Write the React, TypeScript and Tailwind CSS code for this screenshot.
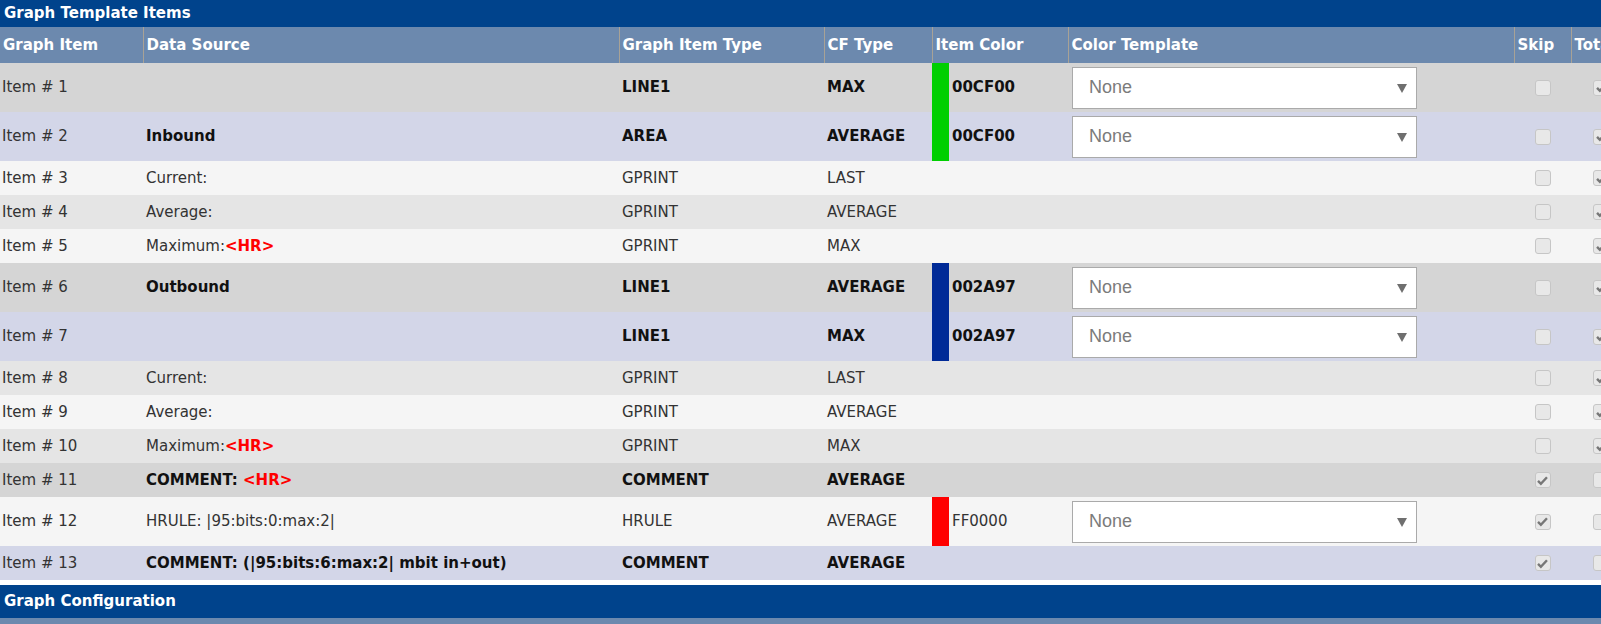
import React from "react";

type Item = {
  id: number;
  source: React.ReactNode;
  type: string;
  cf: string;
  color?: string;
  bold: boolean;
  tall: boolean;
  bg: string;
  skip: boolean;
  total: boolean;
};

const HR = () => <span className="font-bold text-[#ff0000]">&lt;HR&gt;</span>;

const items: Item[] = [
  { id: 1, source: "", type: "LINE1", cf: "MAX", color: "00CF00", bold: true, tall: true, bg: "bg-[#d5d5d5]", skip: false, total: true },
  { id: 2, source: "Inbound", type: "AREA", cf: "AVERAGE", color: "00CF00", bold: true, tall: true, bg: "bg-[#d3d6e8]", skip: false, total: true },
  { id: 3, source: "Current:", type: "GPRINT", cf: "LAST", bold: false, tall: false, bg: "bg-[#f5f5f5]", skip: false, total: true },
  { id: 4, source: "Average:", type: "GPRINT", cf: "AVERAGE", bold: false, tall: false, bg: "bg-[#e5e5e5]", skip: false, total: true },
  { id: 5, source: <>Maximum:<HR /></>, type: "GPRINT", cf: "MAX", bold: false, tall: false, bg: "bg-[#f5f5f5]", skip: false, total: true },
  { id: 6, source: "Outbound", type: "LINE1", cf: "AVERAGE", color: "002A97", bold: true, tall: true, bg: "bg-[#d5d5d5]", skip: false, total: true },
  { id: 7, source: "", type: "LINE1", cf: "MAX", color: "002A97", bold: true, tall: true, bg: "bg-[#d3d6e8]", skip: false, total: true },
  { id: 8, source: "Current:", type: "GPRINT", cf: "LAST", bold: false, tall: false, bg: "bg-[#e5e5e5]", skip: false, total: true },
  { id: 9, source: "Average:", type: "GPRINT", cf: "AVERAGE", bold: false, tall: false, bg: "bg-[#f5f5f5]", skip: false, total: true },
  { id: 10, source: <>Maximum:<HR /></>, type: "GPRINT", cf: "MAX", bold: false, tall: false, bg: "bg-[#e5e5e5]", skip: false, total: true },
  { id: 11, source: <>COMMENT: <HR /></>, type: "COMMENT", cf: "AVERAGE", bold: true, tall: false, bg: "bg-[#d5d5d5]", skip: true, total: false },
  { id: 12, source: "HRULE: |95:bits:0:max:2|", type: "HRULE", cf: "AVERAGE", color: "FF0000", bold: false, tall: true, bg: "bg-[#f5f5f5]", skip: true, total: false },
  { id: 13, source: "COMMENT: (|95:bits:6:max:2| mbit in+out)", type: "COMMENT", cf: "AVERAGE", bold: true, tall: false, bg: "bg-[#d3d6e8]", skip: true, total: false },
];

const swatch: Record<string, string> = {
  "00CF00": "bg-[#00cf00]",
  "002A97": "bg-[#002a97]",
  FF0000: "bg-[#ff0000]",
};

function Checkbox({ checked }: { checked: boolean }) {
  return (
    <span className="inline-flex h-4 w-4 items-center justify-center rounded-[3px] border border-[#c6c6c6] bg-[#e8e8e8] align-middle">
      {checked && (
        <svg viewBox="0 0 16 16" className="h-[13px] w-[13px]">
          <path d="M2.5 8.5l3.5 3.5 7.5-8" fill="none" stroke="#777777" strokeWidth="3" />
        </svg>
      )}
    </span>
  );
}

function ColorSelect() {
  return (
    <div className="flex h-[42px] w-[345px] items-center justify-between border border-[#aaaaaa] bg-white pl-[16px] pr-[9px] font-['Liberation_Sans',Arial,sans-serif] text-[18px] text-[#7b7b7b]">
      <span>None</span>
      <svg viewBox="0 0 10 10" className="h-[10px] w-[10px]">
        <path d="M0 1h10L5 10z" fill="#6f6f6f" />
      </svg>
    </div>
  );
}

const headers = [
  "Graph Item",
  "Data Source",
  "Graph Item Type",
  "CF Type",
  "Item Color",
  "Color Template",
  "Skip",
  "Total",
];

export default function App() {
  return (
    <div className="w-[1601px] overflow-hidden bg-white font-['DejaVu_Sans',Verdana,sans-serif]">
      <div className="w-[1660px]">
        <div className="flex h-[27px] items-center bg-[#00438c] px-1 text-[15px] font-bold text-white">
          Graph Template Items
        </div>
        <table className="w-[1660px] table-fixed border-collapse">
          <colgroup>
            <col className="w-[143px]" />
            <col className="w-[476px]" />
            <col className="w-[205px]" />
            <col className="w-[108px]" />
            <col className="w-[136px]" />
            <col className="w-[446px]" />
            <col className="w-[57px]" />
            <col className="w-[89px]" />
          </colgroup>
          <thead>
            <tr className="h-[36px] bg-[#6c89ae] text-left text-[15px] font-bold text-white">
              {headers.map((h, i) => (
                <th
                  key={h}
                  className={`overflow-hidden whitespace-nowrap px-[3px] font-bold ${i > 0 ? "border-l border-[#a8a296]" : ""}`}
                >
                  {h}
                </th>
              ))}
            </tr>
          </thead>
          <tbody className="text-[15px]">
            {items.map((it) => (
              <tr key={it.id} className={`${it.bg} ${it.tall ? "h-[49px]" : "h-[34px]"}`}>
                <td className="whitespace-nowrap px-[2px] text-[#333333]">Item # {it.id}</td>
                <td className={`whitespace-nowrap px-[3px] ${it.bold ? "font-bold text-[#111111]" : "text-[#333333]"}`}>
                  {it.source}
                </td>
                <td className={`px-[3px] ${it.bold ? "font-bold text-[#111111]" : "text-[#333333]"}`}>{it.type}</td>
                <td className={`px-[3px] ${it.bold ? "font-bold text-[#111111]" : "text-[#333333]"}`}>{it.cf}</td>
                <td className="p-0">
                  {it.color && (
                    <div className={`flex items-center ${it.tall ? "h-[49px]" : "h-[34px]"}`}>
                      <span className={`h-full w-[17px] ${swatch[it.color]}`} />
                      <span className={`pl-[3px] ${it.bold ? "font-bold text-[#111111]" : "text-[#333333]"}`}>
                        {it.color}
                      </span>
                    </div>
                  )}
                </td>
                <td className="px-[4px]">{it.color && <ColorSelect />}</td>
                <td className="text-center">
                  <Checkbox checked={it.skip} />
                </td>
                <td className="pl-[22px]">
                  <Checkbox checked={it.total} />
                </td>
              </tr>
            ))}
          </tbody>
        </table>
        <div className="h-[5px]" />
        <div className="flex h-[33px] items-center bg-[#00438c] px-1 text-[15px] font-bold text-white">
          Graph Configuration
        </div>
        <div className="h-[36px] bg-[#6c89ae]" />
      </div>
    </div>
  );
}
